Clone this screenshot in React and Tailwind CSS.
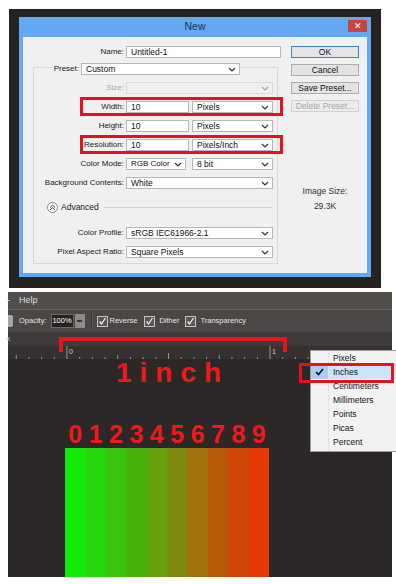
import React from 'react';

const sans = "font-['Liberation_Sans',Arial,sans-serif]";

const gradient = ['#14ea0a', '#27d70c', '#37c50c', '#48b20c', '#63a10e', '#7e8a0f', '#9f720b', '#b75b07', '#d04806', '#e53806'];
const digits = ['0', '1', '2', '3', '4', '5', '6', '7', '8', '9'];
const units = ['Pixels', 'Inches', 'Centimeters', 'Millimeters', 'Points', 'Picas', 'Percent'];

const Chevron = () => (
    <svg width="8" height="5" viewBox="0 0 8 5" className="shrink-0">
        <path d="M1 1l3 3 3-3" fill="none" stroke="#333" strokeWidth="1.2" />
    </svg>
);

const Box = ({ className = '', select, disabled, children }) => (
    <div className={`h-[12px] flex items-center justify-between pl-[4px] pr-[3px] border text-[8.5px] leading-none ${disabled ? 'border-[#dadada] bg-[#f0f0f0]' : 'border-[#b5b7bc] bg-white text-[#111]'} ${className}`}>
        <span className="whitespace-nowrap">{children}</span>
        {select && (disabled ? <span className="opacity-40"><Chevron /></span> : <Chevron />)}
    </div>
);

const Row = ({ label, disabled, className = '', children }) => (
    <div className={`relative flex items-center h-[12px] ${className}`}>
        <div className={`w-[90px] text-right text-[8px] leading-none whitespace-nowrap ${disabled ? 'text-[#a8a8a8]' : 'text-[#1a1a1a]'}`}>{label}</div>
        <div className="ml-[2px] flex">{children}</div>
    </div>
);

const Button = ({ children, primary, disabled }) => (
    <div className={`h-[12px] w-[68px] flex items-center justify-center border text-[8.5px] leading-none ${primary ? 'border-[#3c87d0] bg-[#e5e5e5]' : disabled ? 'border-[#d0d0d0] bg-[#ececec] text-[#a8a8a8]' : 'border-[#acacac] bg-[#e3e3e3]'} ${disabled ? '' : 'text-[#111]'}`}>
        {children}
    </div>
);

const Check = () => (
    <div className="w-[11px] h-[11px] border border-[#c8c5c4] bg-[#5a5655] flex items-center justify-center">
        <svg width="9" height="9" viewBox="0 0 9 9">
            <path d="M1.5 4.5l2 2.5 4-6" fill="none" stroke="#ececec" strokeWidth="1.3" />
        </svg>
    </div>
);

const Ruler = () => {
    const ticks = [];
    for (let i = -5; i < 26; i++) {
        const x = 59 + i * 12.69;
        const len = i % 16 === 0 ? 13 : i % 8 === 0 ? 6 : i % 4 === 0 ? 4 : 2;
        ticks.push(<line key={i} x1={x} x2={x} y1={13 - len} y2={13} stroke="#9a9693" strokeWidth="1" />);
    }
    return (
        <svg width="384" height="13" className="block">
            {ticks}
            <text x="61" y="8" fontSize="7" fill="#cfcfcf" fontFamily="Liberation Sans, Arial">0</text>
            <text x="264" y="8" fontSize="7" fill="#cfcfcf" fontFamily="Liberation Sans, Arial">1</text>
        </svg>
    );
};

export default function App() {
    return (
        <div className={`relative w-[396px] h-[584px] bg-white overflow-hidden ${sans}`}>
            {/* dialog screenshot */}
            <div className="ml-[9px] mt-[9px] w-[372px] h-[279px] bg-[#26221f] pl-[10px] pt-[8px]">
                <div className="w-[352px] h-[260px] bg-[#64a8f2] flex flex-col">
                    <div className="relative h-[20px] flex items-center justify-center text-[10.5px] text-[#1d3350]">
                        New
                        <div className="absolute right-[4px] top-[3px] w-[19px] h-[12px] bg-[#c9453d] flex items-center justify-center text-white text-[9px] leading-none">✕</div>
                    </div>
                    <div className="mx-[4px] h-[236px] bg-[#f0f0f0] flex">
                        <div className="w-[262px] pt-[9px]">
                            <div className="flex items-center h-[12px]">
                                <div className="w-[101px] text-right text-[8px] leading-none text-[#1a1a1a]">Name:</div>
                                <Box className="ml-[2px] w-[155px]">Untitled-1</Box>
                            </div>
                            <div className="mt-[9px] ml-[10px] w-[245px] h-[197px] border border-[#d8d8d8]">
                                <div className="-mt-[5px] flex items-center h-[12px]">
                                    <div className="w-[45px] text-right text-[8px] leading-none text-[#1a1a1a]">
                                        <span className="bg-[#f0f0f0] pl-[2px]">Preset:</span>
                                    </div>
                                    <Box select className="ml-[2px] w-[159px]">Custom</Box>
                                </div>
                                <Row label="Size:" disabled className="mt-[7px]">
                                    <Box select disabled className="w-[147px]">{''}</Box>
                                </Row>
                                <Row label="Width:" className="mt-[7px]">
                                    <div className="absolute left-[46px] -top-[4px] w-[203px] h-[19px] border-[3px] border-[#e5121b]" />
                                    <Box className="w-[63px]">10</Box>
                                    <Box select className="ml-[3px] w-[81px]">Pixels</Box>
                                </Row>
                                <Row label="Height:" className="mt-[7px]">
                                    <Box className="w-[63px]">10</Box>
                                    <Box select className="ml-[3px] w-[81px]">Pixels</Box>
                                </Row>
                                <Row label="Resolution:" className="mt-[7px]">
                                    <div className="absolute left-[46px] -top-[4px] w-[203px] h-[19px] border-[3px] border-[#e5121b]" />
                                    <Box className="w-[63px]">10</Box>
                                    <Box select className="ml-[3px] w-[81px]">Pixels/Inch</Box>
                                </Row>
                                <Row label="Color Mode:" className="mt-[7px]">
                                    <Box select className="w-[60px] text-[8px]">RGB Color</Box>
                                    <Box select className="ml-[6px] w-[81px]">8 bit</Box>
                                </Row>
                                <Row label="Background Contents:" className="mt-[7px]">
                                    <Box select className="w-[147px]">White</Box>
                                </Row>
                                <div className="mt-[13px] flex items-center h-[11px] pl-[13px]">
                                    <div className="w-[11px] h-[11px] rounded-full border border-[#8a8a8a] bg-white flex items-center justify-center">
                                        <svg width="7" height="7" viewBox="0 0 7 7">
                                            <path d="M1 3.5l2.5-2.3L6 3.5M1 6l2.5-2.3L6 6" fill="none" stroke="#333" strokeWidth="1" />
                                        </svg>
                                    </div>
                                    <span className="ml-[3px] text-[8.5px] leading-none text-[#1a1a1a]">Advanced</span>
                                    <div className="ml-[5px] w-[168px] h-px bg-[#d2d2d2]" />
                                </div>
                                <Row label="Color Profile:" className="mt-[14px]">
                                    <Box select className="w-[147px]">sRGB IEC61966-2.1</Box>
                                </Row>
                                <Row label="Pixel Aspect Ratio:" className="mt-[7px]">
                                    <Box select className="w-[147px]">Square Pixels</Box>
                                </Row>
                            </div>
                        </div>
                        <div className="ml-[6px] w-[68px] pt-[9px] flex flex-col">
                            <div className="flex flex-col gap-[6px]">
                                <Button primary>OK</Button>
                                <Button>Cancel</Button>
                                <Button>Save Preset...</Button>
                                <Button disabled>Delete Preset...</Button>
                            </div>
                            <div className="mt-[74px] text-center text-[8.5px] leading-[10px] text-[#333]">Image Size:</div>
                            <div className="mt-[5px] text-center text-[8.5px] leading-[10px] text-[#333]">29.3K</div>
                        </div>
                    </div>
                </div>
            </div>

            {/* photoshop screenshot */}
            <div className="mt-[4px] ml-[8px] w-[384px] h-[285px] flex flex-col bg-[#2b2827]">
                <div className="h-[17px] bg-[#524e4c] flex items-center text-[9px] leading-none text-[#dedede]">
                    <span className="-ml-[2px] w-[4px] overflow-hidden">–</span>
                    <span className="ml-[9px]">Help</span>
                </div>
                <div className="h-px bg-[#676361]" />
                <div className="h-[22px] bg-[#4b4746] flex items-center text-[7.5px] leading-none text-[#e4e4e4]">
                    <div className="w-[5px] h-[12px] bg-[#a9a6a4] rounded-r-[2px]" />
                    <span className="ml-[6px]">Opacity:</span>
                    <div className="ml-[4px] w-[23px] h-[14px] bg-[#242120] border border-[#6d6968] flex items-center justify-center text-white">100%</div>
                    <div className="ml-px w-[10px] h-[14px] bg-[#8e8a88] flex items-center justify-center">
                        <div className="w-[5px] h-[2px] bg-[#3a3736]" />
                    </div>
                    <div className="ml-[6px] w-px h-[16px] bg-[#343130]" />
                    <div className="w-px h-[16px] bg-[#5f5b5a]" />
                    <div className="ml-[4px]"><Check /></div>
                    <span className="ml-[2px]">Reverse</span>
                    <div className="ml-[7px]"><Check /></div>
                    <span className="ml-[4px]">Dither</span>
                    <div className="ml-[6px]"><Check /></div>
                    <span className="ml-[4px]">Transparency</span>
                </div>
                <div className="h-[14px] bg-[#3e3b3a] flex items-center text-[8px] leading-none text-[#cfcfcf]">
                    <span className="-ml-[2px]">x</span>
                </div>
                <div className="h-[13px] bg-[#343130]">
                    <Ruler />
                </div>
                <div className="flex-1 flex flex-col font-bold text-[#f01818]">
                    <div className="pl-[108px] text-[28px] leading-[28px] tracking-[8px]">1inch</div>
                    <div className="mt-[35px] ml-[57px] w-[204px] grid grid-cols-10 text-[25px] leading-[25px] text-center">
                        {digits.map((d) => (
                            <span key={d}>{d}</span>
                        ))}
                    </div>
                    <div className="mt-px ml-[57px] w-[204px] h-[129px] flex">
                        {gradient.map((c) => (
                            <div key={c} className="flex-1" style={{ backgroundColor: c }} />
                        ))}
                    </div>
                </div>
            </div>

            {/* red bracket over ruler */}
            <div className="absolute left-[59px] top-[337px] w-[228px] h-[15px] border-t-4 border-l-4 border-r-4 border-[#e8141c]" />

            {/* units menu */}
            <div className="absolute left-[310px] top-[350px] w-[92px] h-[102px] border border-[#9c9c9c] bg-[#f2f2f2] flex">
                <div className="w-[18px] border-r border-[#e2e2e2]" />
                <div className="flex-1 flex flex-col text-[8.5px] leading-none text-[#151515]">
                    {units.map((u) => (
                        <div key={u} className={`relative h-[14px] flex items-center pl-[4px] ${u === 'Inches' ? 'bg-[#cfe3f8]' : ''}`}>
                            {u === 'Inches' && (
                                <div className="absolute -left-[18px] top-0 w-[17px] h-[14px] bg-[#a9cdf1] flex items-center justify-center">
                                    <svg width="9" height="8" viewBox="0 0 9 8">
                                        <path d="M1 4l2.5 2.5L8 1" fill="none" stroke="#111" strokeWidth="1.6" />
                                    </svg>
                                </div>
                            )}
                            {u}
                        </div>
                    ))}
                </div>
            </div>
            <div className="absolute left-[299px] top-[363px] w-[95px] h-[20px] border-[3px] border-[#e5121b]" />
        </div>
    );
}
